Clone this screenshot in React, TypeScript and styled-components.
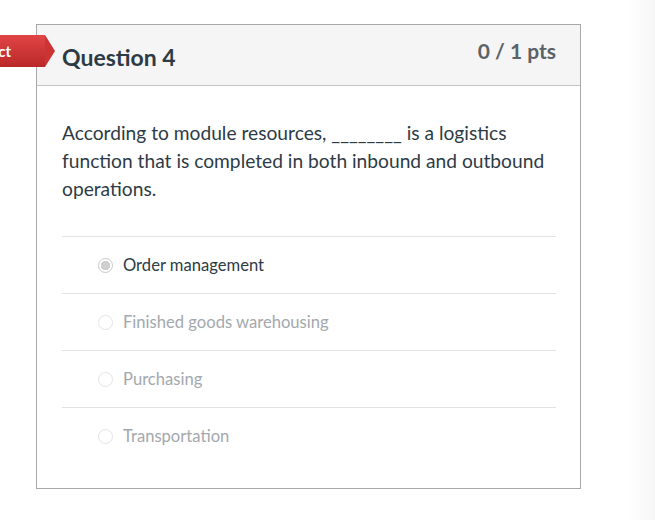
import React from "react"
import styled, { createGlobalStyle } from "styled-components"

const GlobalStyle = createGlobalStyle`
	html, body {
		margin: 0;
		padding: 0;
		height: 100%;
	}
	body {
		font-family: Lato, "Open Sans", "Liberation Sans", sans-serif;
		color: #2d3b45;
		background: linear-gradient(to right, #ffffff 628px, #f6f6f6 655px);
	}
`

const answers = [
	{ text: "Order management", selected: true },
	{ text: "Finished goods warehousing", selected: false },
	{ text: "Purchasing", selected: false },
	{ text: "Transportation", selected: false },
]

export default function App() {
	return (
		<>
			<GlobalStyle />
			<Page>
				<Card>
					<Badge>Incorrect</Badge>
					<Header>
						<Title>Question 4</Title>
						<Points>0 / 1 pts</Points>
					</Header>
					<Body>
						<QuestionText>
							According to module resources, ________ is a logistics function that is
							completed in both inbound and outbound operations.
						</QuestionText>
						<AnswerList>
							{answers.map((a) => (
								<AnswerRow key={a.text}>
									<Radio $selected={a.selected} />
									<AnswerLabel $selected={a.selected}>{a.text}</AnswerLabel>
								</AnswerRow>
							))}
						</AnswerList>
					</Body>
				</Card>
			</Page>
		</>
	)
}

const Page = styled.div`
	padding: 24px 0 0 36px;
`

const Card = styled.div`
	position: relative;
	width: 543px;
	height: 463px;
	border: 1px solid #a8a8a8;
	background: #fff;
`

const Badge = styled.div`
	position: absolute;
	top: 10px;
	left: -100px;
	width: 108px;
	height: 32px;
	box-sizing: border-box;
	padding-right: 34px;
	display: flex;
	align-items: center;
	justify-content: flex-end;
	background: linear-gradient(to bottom, #e14545, #b92828);
	color: #fff;
	font-weight: 700;
	font-size: 15px;
	&::after {
		content: "";
		position: absolute;
		right: -10px;
		top: 0;
		border-top: 16px solid transparent;
		border-bottom: 16px solid transparent;
		border-left: 10px solid #cc3434;
	}
`

const Header = styled.div`
	height: 60px;
	background: #f5f5f5;
	border-bottom: 1px solid #c4c4c4;
	display: flex;
	justify-content: space-between;
	align-items: flex-start;
	padding: 0 24px 0 25px;
`

const Title = styled.h2`
	margin: 18px 0 0;
	font-size: 23px;
	font-weight: 700;
	line-height: 28px;
	color: #2d3b45;
`

const Points = styled.div`
	margin-top: 13px;
	font-size: 21px;
	font-weight: 700;
	line-height: 26px;
	color: #5b6268;
`

const Body = styled.div`
	padding: 33px 24px 0 25px;
`

const QuestionText = styled.p`
	margin: 0 0 33px;
	font-size: 19.2px;
	line-height: 28px;
	color: #2d3b45;
`

const AnswerList = styled.div`
	display: flex;
	flex-direction: column;
`

const AnswerRow = styled.div`
	height: 56px;
	border-top: 1px solid #e2e2e2;
	display: flex;
	align-items: center;
	padding-left: 36px;
	gap: 10px;
`

const Radio = styled.span<{ $selected: boolean }>`
	width: 15px;
	height: 15px;
	box-sizing: border-box;
	border-radius: 50%;
	border: 1px solid ${(p) => (p.$selected ? "#c8c8c8" : "#e3e3e3")};
	background: ${(p) => (p.$selected ? "radial-gradient(circle, #cfcfcf 0 4.5px, #fff 5px)" : "#fff")};
`

const AnswerLabel = styled.span<{ $selected: boolean }>`
	font-size: 16.6px;
	color: ${(p) => (p.$selected ? "#2d3b45" : "#a3a8ad")};
`
